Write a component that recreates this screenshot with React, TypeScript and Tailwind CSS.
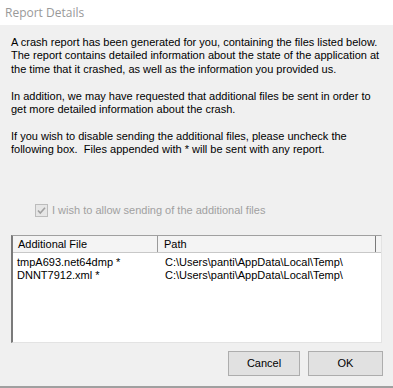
import React from 'react'

const files = [
  { name: 'tmpA693.net64dmp *', path: 'C:\\Users\\panti\\AppData\\Local\\Temp\\' },
  { name: 'DNNT7912.xml *', path: 'C:\\Users\\panti\\AppData\\Local\\Temp\\' },
]

function App() {
  return (
    <div className="w-[393px] h-[388px] bg-[#f0f0f0] flex flex-col overflow-hidden" style={{ fontFamily: '"Liberation Sans", Arial, sans-serif' }}>
      <div className="h-[25px] bg-white flex items-center pl-[5px] text-[12px] text-[#999999] shrink-0" style={{ fontFamily: '"Open Sans", "Noto Sans", sans-serif' }}>
        Report Details
      </div>

      <div className="px-[11px] pt-[11px] text-[11px] leading-[13.4px] text-black whitespace-nowrap">
        <p>
          A crash report has been generated for you, containing the files listed below.<br />
          The report contains detailed information about the state of the application at<br />
          the time that it crashed, as well as the information you provided us.
        </p>
        <p className="mt-[13.4px]">
          In addition, we may have requested that additional files be sent in order to<br />
          get more detailed information about the crash.
        </p>
        <p className="mt-[13.4px]">
          If you wish to disable sending the additional files, please uncheck the<br />
          following box.&nbsp; Files appended with * will be sent with any report.
        </p>
      </div>

      <div className="flex items-center gap-[4px] ml-[35px] mt-[47px] h-[13px]">
        <svg width="13" height="13" viewBox="0 0 13 13" className="shrink-0">
          <rect x="0.5" y="0.5" width="12" height="12" fill="#e6e6e6" stroke="#bcbcbc" />
          <path d="M3 6.5 L5.3 9 L10 3.8" fill="none" stroke="#a0a0a0" strokeWidth="1.6" />
        </svg>
        <span className="text-[11px] text-[#a0a0a0] whitespace-nowrap">I wish to allow sending of the additional files</span>
      </div>

      <div className="mx-[11px] mt-[18px] h-[108px] bg-white border-l-2 border-t border-l-[#7a7a7a] border-t-[#a0a0a0] border-r border-b border-r-[#e3e3e3] border-b-[#e3e3e3] flex flex-col text-[11px]">
        <div className="flex h-[17px] bg-[#f4f4f4] border-b border-[#c8c8c8] leading-[17px]">
          <div className="w-[145px] pl-[5px] border-r border-[#9a9a9a]">Additional File</div>
          <div className="w-[218px] pl-[6px] border-r border-[#7a7a7a]">Path</div>
          <div className="flex-1" />
        </div>
        <div className="pt-[3px] leading-[13px]">
          {files.map((f) => (
            <div key={f.name} className="flex">
              <div className="w-[145px] pl-[4px]">{f.name}</div>
              <div className="pl-[7px]">{f.path}</div>
            </div>
          ))}
        </div>
      </div>

      <div className="flex justify-end gap-[8px] mr-[10px] mt-[8px]">
        <button className="w-[72px] h-[25px] bg-[#e1e1e1] border border-[#adadad] text-[11px] text-black">Cancel</button>
        <button className="w-[75px] h-[25px] bg-[#e1e1e1] border border-[#adadad] text-[11px] text-black">OK</button>
      </div>

      <div className="flex-1" />
      <div className="h-[2px] bg-[#a0a0a0] shrink-0" />
    </div>
  )
}

export default App
